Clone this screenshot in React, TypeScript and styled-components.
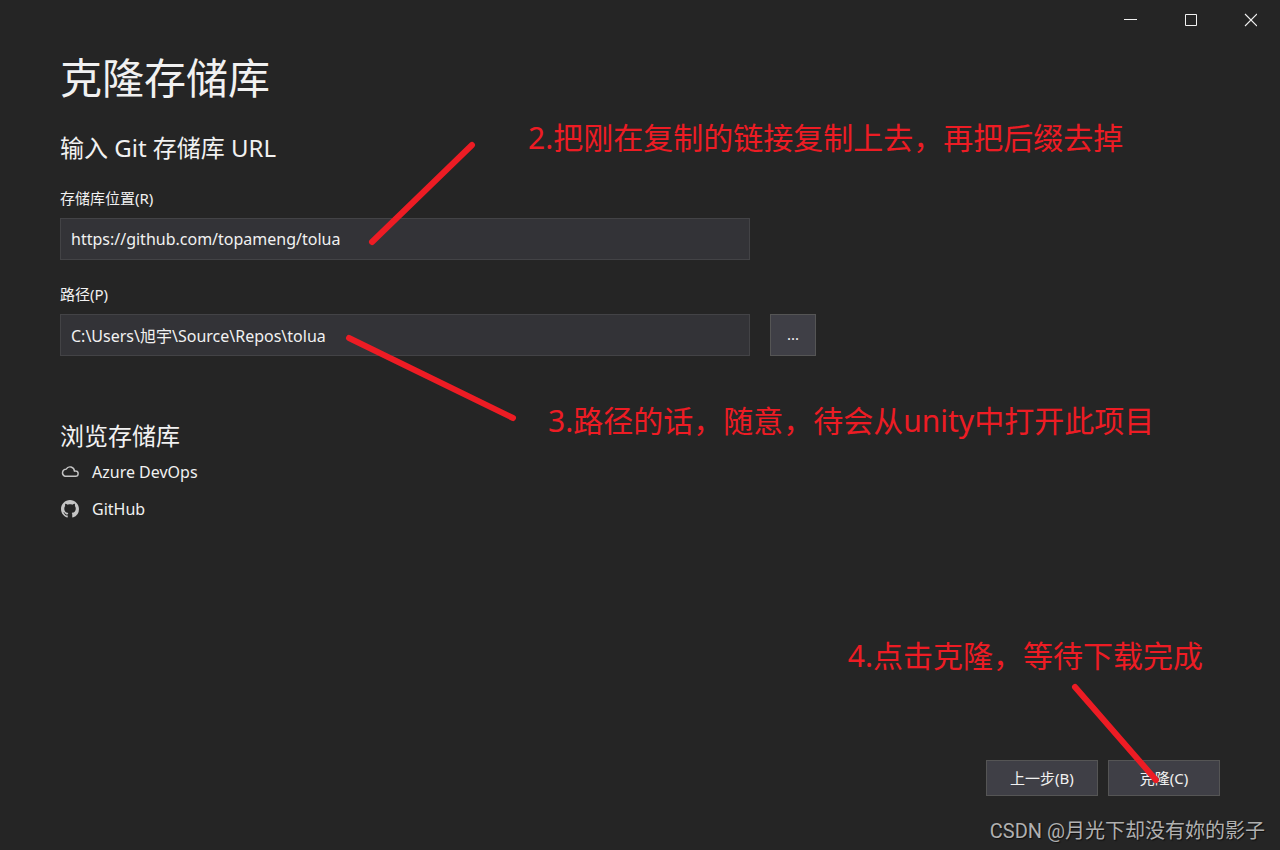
import React from "react";
import styled, { createGlobalStyle } from "styled-components";

const uiFont = `"Noto Sans", "Noto Sans CJK SC", sans-serif`;

const GlobalStyle = createGlobalStyle`
  * { box-sizing: border-box; }
  body {
    margin: 0;
    background: #252525;
    color: #f1f1f1;
    font-family: ${uiFont};
    font-size: 15px;
  }
`;

const Window = styled.div`
  position: relative;
  display: flex;
  flex-direction: column;
  min-height: 100vh;
  overflow: hidden;
  background: #252525;
`;

const TitleBar = styled.header`
  display: flex;
  justify-content: flex-end;
  height: 40px;
`;

const CaptionButton = styled.button`
  display: flex;
  align-items: center;
  justify-content: center;
  width: 60px;
  padding: 0;
  border: 0;
  background: transparent;
  color: #f1f1f1;
`;

const Content = styled.main`
  flex: 1;
  padding: 8px 60px 0;
`;

const Title = styled.h1`
  margin: 0;
  font-size: 42px;
  line-height: 60px;
  font-weight: 400;
`;

const SectionTitle = styled.h2<{ $top: number }>`
  margin: ${(p) => p.$top}px 0 0;
  font-size: 24px;
  line-height: 32px;
  font-weight: 400;
`;

const Field = styled.div`
  margin-top: 24px;
`;

const Label = styled.label`
  display: block;
  font-size: 15px;
  line-height: 20px;
  margin-bottom: 10px;
`;

const FieldRow = styled.div`
  display: flex;
  gap: 20px;
`;

const TextBox = styled.input`
  flex: 0 1 690px;
  min-width: 0;
  height: 42px;
  padding: 0 10px 1px;
  border: 1px solid #434346;
  border-radius: 0;
  background: #333337;
  color: #f1f1f1;
  font-family: ${uiFont};
  font-size: 16px;
`;

const PushButton = styled.button<{ $width: number; $height: number }>`
  flex: none;
  width: ${(p) => p.$width}px;
  height: ${(p) => p.$height}px;
  padding: 0 0 2px;
  border: 1px solid #555555;
  border-radius: 0;
  background: #3f3f46;
  color: #f1f1f1;
  font-family: ${uiFont};
  font-size: 15px;
`;

const ProviderList = styled.ul`
  display: flex;
  flex-direction: column;
  align-items: flex-start;
  gap: 13px;
  margin: 8px 0 0;
  padding: 0;
  list-style: none;
`;

const ProviderLink = styled.a`
  display: flex;
  align-items: center;
  gap: 12px;
  font-size: 16px;
  line-height: 24px;
  color: #f1f1f1;
  text-decoration: none;
`;

const Actions = styled.footer`
  display: flex;
  justify-content: flex-end;
  gap: 10px;
  padding: 0 60px;
`;

const Watermark = styled.div`
  padding: 19px 15px 3px;
  text-align: right;
  font-family: Roboto, "Noto Sans CJK SC", sans-serif;
  font-size: 20px;
  line-height: 32px;
  color: #b0b0b0;
  text-shadow: 1px 1px 1px #101010;
`;

type Edges = { $left?: number; $right?: number; $top?: number; $bottom?: number };

const edge = (value?: number) => (value === undefined ? "auto" : `${value}px`);

const Note = styled.p<Edges>`
  position: absolute;
  left: ${(p) => edge(p.$left)};
  right: ${(p) => edge(p.$right)};
  top: ${(p) => edge(p.$top)};
  bottom: ${(p) => edge(p.$bottom)};
  margin: 0;
  white-space: nowrap;
  pointer-events: none;
  color: #ed1c24;
  font-size: 30px;
  line-height: 40px;
`;

const Stroke = styled.svg<Edges>`
  position: absolute;
  left: ${(p) => edge(p.$left)};
  right: ${(p) => edge(p.$right)};
  top: ${(p) => edge(p.$top)};
  bottom: ${(p) => edge(p.$bottom)};
  pointer-events: none;
  stroke: #ed1c24;
  stroke-width: 6;
  stroke-linecap: round;
`;

const CloudIcon = () => (
  <svg width="20" height="20" viewBox="0 0 20 20" fill="none" stroke="#c5c5c5" strokeWidth="1.4" strokeLinejoin="round">
    <path d="M5 14.3h10.4a2.6 2.6 0 0 0 .2-5.3 2.4 2.4 0 0 0-1.2.2 4.4 4.4 0 0 0-8.2-2.1A3.7 3.7 0 0 0 5 14.3z" />
  </svg>
);

const GitHubIcon = () => (
  <svg width="20" height="20" viewBox="-0.9 -0.9 17.8 17.8" fill="#c5c5c5">
    <path d="M8 0C3.58 0 0 3.58 0 8c0 3.54 2.29 6.53 5.47 7.59.4.07.55-.17.55-.38 0-.19-.01-.82-.01-1.49-2.01.37-2.53-.49-2.69-.94-.09-.23-.48-.94-.82-1.13-.28-.15-.68-.52-.01-.53.63-.01 1.08.58 1.23.82.72 1.21 1.87.87 2.33.66.07-.52.28-.87.51-1.07-1.78-.2-3.64-.89-3.64-3.95 0-.87.31-1.59.82-2.15-.08-.2-.36-1.02.08-2.12 0 0 .67-.21 2.2.82.64-.18 1.32-.27 2-.27s1.36.09 2 .27c1.53-1.04 2.2-.82 2.2-.82.44 1.1.16 1.92.08 2.12.51.56.82 1.27.82 2.15 0 3.07-1.87 3.75-3.65 3.95.29.25.54.73.54 1.48 0 1.07-.01 1.93-.01 2.2 0 .21.15.46.55.38A8.01 8.01 0 0 0 16 8c0-4.42-3.58-8-8-8z" />
  </svg>
);

export default function App() {
  return (
    <>
      <GlobalStyle />
      <Window>
        <TitleBar>
          <CaptionButton aria-label="最小化">
            <svg width="14" height="14" viewBox="0 0 14 14" stroke="currentColor">
              <path d="M1 6.5h13" />
            </svg>
          </CaptionButton>
          <CaptionButton aria-label="最大化">
            <svg width="14" height="14" viewBox="0 0 14 14" fill="none" stroke="currentColor">
              <path d="M2.5 1.5h11v11h-11z" />
            </svg>
          </CaptionButton>
          <CaptionButton aria-label="关闭">
            <svg width="14" height="14" viewBox="0 0 14 14" stroke="currentColor" strokeWidth="1.1">
              <path d="M2 1l12 12M14 1L2 13" />
            </svg>
          </CaptionButton>
        </TitleBar>

        <Content>
          <Title>克隆存储库</Title>
          <SectionTitle $top={24}>输入 Git 存储库 URL</SectionTitle>

          <Field>
            <Label htmlFor="repo">存储库位置(R)</Label>
            <FieldRow>
              <TextBox id="repo" defaultValue="https://github.com/topameng/tolua" />
            </FieldRow>
          </Field>

          <Field>
            <Label htmlFor="path">路径(P)</Label>
            <FieldRow>
              <TextBox id="path" defaultValue="C:\Users\旭宇\Source\Repos\tolua" />
              <PushButton $width={46} $height={42}>...</PushButton>
            </FieldRow>
          </Field>

          <SectionTitle $top={64}>浏览存储库</SectionTitle>
          <ProviderList>
            <li>
              <ProviderLink href="#azure"><CloudIcon />Azure DevOps</ProviderLink>
            </li>
            <li>
              <ProviderLink href="#github"><GitHubIcon />GitHub</ProviderLink>
            </li>
          </ProviderList>
        </Content>

        <Actions>
          <PushButton $width={112} $height={36}>上一步(B)</PushButton>
          <PushButton $width={112} $height={36}>克隆(C)</PushButton>
        </Actions>
        <Watermark>CSDN @月光下却没有妳的影子</Watermark>

        <Note $left={528} $top={118}>2.把刚在复制的链接复制上去，再把后缀去掉</Note>
        <Stroke $left={368} $top={141} width="108" height="105">
          <path d="M4 101L104 4" />
        </Stroke>
        <Note $left={548} $top={401}>3.路径的话，随意，待会从unity中打开此项目</Note>
        <Stroke $left={345} $top={334} width="173" height="88">
          <path d="M4 4L168 84" />
        </Stroke>
        <Note $right={77} $bottom={174}>4.点击克隆，等待下载完成</Note>
        <Stroke $right={119} $bottom={64} width="90" height="103">
          <path d="M4 4L85 97" />
        </Stroke>
      </Window>
    </>
  );
}
